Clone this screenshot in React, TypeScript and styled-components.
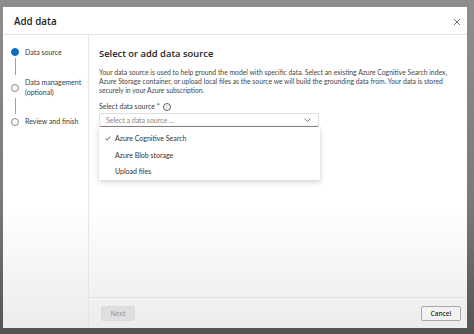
import React from 'react';
import styled, { createGlobalStyle } from 'styled-components';

const GlobalStyle = createGlobalStyle`
  html, body {
    margin: 0;
    padding: 0;
  }
  body {
    font-family: Lato, 'Open Sans', sans-serif;
    color: #323130;
  }
`;

const Backdrop = styled.div`
  width: 474px;
  height: 334px;
  box-sizing: border-box;
  padding: 7px 7px 6px 3px;
  background: linear-gradient(180deg, #8e8e8e 0%, #7a7a7a 60%, #545454 100%);
  display: flex;
`;

const Dialog = styled.div`
  flex: 1;
  display: flex;
  flex-direction: column;
  background: linear-gradient(180deg, #ffffff 0%, #ffffff 62%, #ececec 100%);
  overflow: hidden;
`;

const Header = styled.div`
  height: 28px;
  box-sizing: border-box;
  padding: 2px 5px 0 11px;
  display: flex;
  align-items: center;
  justify-content: space-between;
  border-bottom: 1px solid #e4e4e4;
`;

const Title = styled.h1`
  margin: 0;
  font-family: 'Open Sans', sans-serif;
  font-size: 9.8px;
  font-weight: 600;
  color: #252423;
`;

const CloseButton = styled.button`
  border: none;
  background: none;
  padding: 0;
  width: 10px;
  height: 10px;
  display: flex;
  align-items: center;
  justify-content: center;
  color: #6b7b80;
`;

const Body = styled.div`
  flex: 1;
  display: flex;
  min-height: 0;
`;

const Sidebar = styled.nav`
  width: 86px;
  border-right: 1px solid #e6e6e6;
  padding: 12.5px 0 0 8px;
  box-sizing: border-box;
`;

const Step = styled.div`
  display: flex;
  align-items: center;
  gap: 6px;
`;

const Dot = styled.span<{ $active?: boolean }>`
  flex: none;
  width: 8px;
  height: 8px;
  border-radius: 50%;
  box-sizing: border-box;
  border: 1px solid ${(p) => (p.$active ? '#0f6cbd' : '#8a8886')};
  background: ${(p) => (p.$active ? '#0f6cbd' : '#fff')};
`;

const StepLabel = styled.span`
  font-size: 7px;
  line-height: 9.5px;
  color: #3b3a39;
`;

const Connector = styled.div<{ $h: number; $after: number }>`
  width: 1px;
  height: ${(p) => p.$h}px;
  margin: 1px 0 ${(p) => p.$after}px 3.5px;
  background: #a19f9d;
`;

const Main = styled.div`
  flex: 1;
  display: flex;
  flex-direction: column;
`;

const Content = styled.div`
  flex: 1;
  padding: 13px 10px 0 10px;
`;

const SectionTitle = styled.h2`
  margin: 0 0 7px;
  font-family: 'Open Sans', sans-serif;
  font-size: 9.4px;
  line-height: 12.8px;
  font-weight: 600;
  color: #252423;
`;

const Description = styled.p`
  margin: 0 0 7px;
  font-size: 6.8px;
  line-height: 9.2px;
  white-space: nowrap;
  color: #484644;
`;

const FieldLabel = styled.label`
  display: flex;
  align-items: center;
  gap: 3px;
  font-size: 7px;
  line-height: 8.4px;
  color: #3b3a39;
  margin-bottom: 2px;
`;

const InfoIcon = styled.span`
  width: 6px;
  height: 6px;
  border: 0.8px solid #605e5c;
  border-radius: 50%;
  font-size: 4.5px;
  line-height: 6px;
  text-align: center;
  color: #605e5c;
`;

const SelectWrap = styled.div`
  position: relative;
  width: 220px;
`;

const SelectBox = styled.div`
  height: 14px;
  box-sizing: border-box;
  border: 1px solid #e1dfdd;
  border-bottom-color: #8a8886;
  border-radius: 2px;
  display: flex;
  align-items: center;
  justify-content: space-between;
  padding: 0 7px 0 6px;
  font-size: 7px;
  color: #8a8886;
`;

const Menu = styled.ul`
  position: absolute;
  top: 14px;
  left: 0;
  right: -1px;
  margin: 0;
  padding: 3px 0 1px;
  list-style: none;
  background: #fff;
  box-shadow: 0 2px 6px rgba(0, 0, 0, 0.18), 0 0 1px rgba(0, 0, 0, 0.12);
`;

const MenuItem = styled.li`
  height: 16.5px;
  display: flex;
  align-items: center;
  padding-left: 6px;
  gap: 4px;
  font-size: 7px;
  color: #323130;
`;

const Check = styled.span<{ $on?: boolean }>`
  width: 6px;
  display: flex;
  visibility: ${(p) => (p.$on ? 'visible' : 'hidden')};
`;

const Footer = styled.div`
  height: 30px;
  border-top: 1px solid #e2e2e2;
  display: flex;
  align-items: center;
  justify-content: space-between;
  padding: 0 6px 0 12px;
`;

const Button = styled.button<{ $disabled?: boolean }>`
  height: 15px;
  min-width: ${(p) => (p.$disabled ? 34 : 40)}px;
  padding: 0 6px;
  border-radius: 2px;
  font-family: 'Open Sans', sans-serif;
  font-size: 6.5px;
  font-weight: 600;
  border: 1px solid ${(p) => (p.$disabled ? '#dcdcdc' : '#a8a8a8')};
  background: ${(p) => (p.$disabled ? '#dedede' : '#f2f2f2')};
  color: ${(p) => (p.$disabled ? '#9e9e9e' : '#323130')};
`;

const options = ['Azure Cognitive Search', 'Azure Blob storage', 'Upload files'];

export default function App() {
  return (
    <Backdrop>
      <GlobalStyle />
      <Dialog>
        <Header>
          <Title>Add data</Title>
          <CloseButton aria-label="Close">
            <svg width="8" height="8" viewBox="0 0 8 8">
              <path d="M1 1l6 6M7 1L1 7" stroke="currentColor" strokeWidth="1" />
            </svg>
          </CloseButton>
        </Header>
        <Body>
          <Sidebar>
            <Step>
              <Dot $active />
              <StepLabel>Data source</StepLabel>
            </Step>
            <Connector $h={17} $after={3} />
            <Step>
              <Dot />
              <StepLabel>
                Data management
                <br />
                (optional)
              </StepLabel>
            </Step>
            <Connector $h={16} $after={3} />
            <Step>
              <Dot />
              <StepLabel>Review and finish</StepLabel>
            </Step>
          </Sidebar>
          <Main>
            <Content>
              <SectionTitle>Select or add data source</SectionTitle>
              <Description>
                Your data source is used to help ground the model with specific data. Select an
                existing Azure Cognitive Search index,
                <br />
                Azure Storage container, or upload local files as the source we will build the
                grounding data from. Your data is stored
                <br />
                securely in your Azure subscription.
              </Description>
              <FieldLabel>
                Select data source * <InfoIcon>i</InfoIcon>
              </FieldLabel>
              <SelectWrap>
                <SelectBox>
                  <span>Select a data source ...</span>
                  <svg width="7" height="4" viewBox="0 0 7 4">
                    <path d="M0.5 0.5l3 3 3-3" fill="none" stroke="#605e5c" strokeWidth="0.8" />
                  </svg>
                </SelectBox>
                <Menu>
                  {options.map((o, i) => (
                    <MenuItem key={o}>
                      <Check $on={i === 0}>
                        <svg width="6" height="5" viewBox="0 0 6 5">
                          <path d="M0.5 2.6l1.6 1.6L5.5 0.7" fill="none" stroke="#323130" strokeWidth="0.8" />
                        </svg>
                      </Check>
                      {o}
                    </MenuItem>
                  ))}
                </Menu>
              </SelectWrap>
            </Content>
            <Footer>
              <Button $disabled>Next</Button>
              <Button>Cancel</Button>
            </Footer>
          </Main>
        </Body>
      </Dialog>
    </Backdrop>
  );
}
